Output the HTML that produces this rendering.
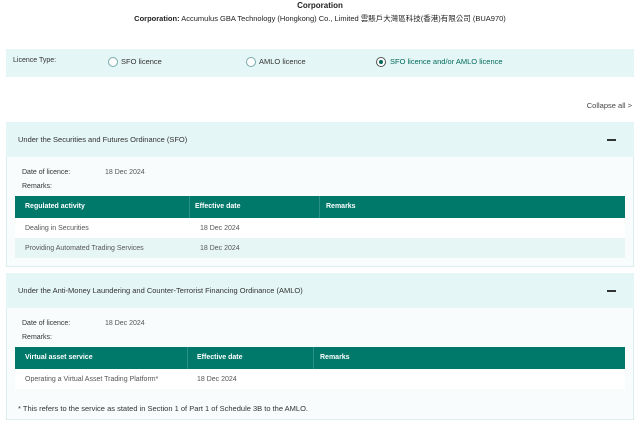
<!DOCTYPE html>
<html><head><meta charset="utf-8"><style>
*{margin:0;padding:0;box-sizing:border-box}
body{width:640px;height:427px;background:#fff;font-family:"Liberation Sans","Noto Sans CJK TC",sans-serif;color:#333;font-size:7px;position:relative;overflow:hidden}
.a{position:absolute;white-space:nowrap}
.bar{position:absolute;left:6px;width:628px;background:#e4f6f5}
.body{position:absolute;left:6px;width:628px;background:#f8fcfc;border:1px solid #dceeee;border-top:none}
.th{position:absolute;left:15px;width:610px;height:22px;background:#00796b;color:#fff;font-weight:bold}
.th span,.tr span{position:absolute;top:7px}
.tr{position:absolute;left:15px;width:610px;height:20px;background:#fff;color:#555}
.radio{position:absolute;width:10px;height:10px;border:1px solid #7aa;border-radius:50%;background:#fff}
.minus{position:absolute;left:607px;width:9px;height:2px;background:#333}
</style></head><body>
<div class="a" style="left:0;width:640px;text-align:center;top:1px;font-weight:bold;font-size:8px;color:#222">Corporation</div>
<div class="a" style="left:0;width:640px;text-align:center;top:13px;font-size:7.5px;color:#222"><b>Corporation:</b> Accumulus GBA Technology (Hongkong) Co., Limited 雲賬戶大灣區科技(香港)有限公司 (BUA970)</div>

<div class="bar" style="top:49px;height:28px"></div>
<div class="a" style="left:13px;top:57px">Licence Type:</div>
<div class="radio" style="left:108px;top:57px"></div><div class="a" style="left:121px;top:57px;font-size:7.5px">SFO licence</div>
<div class="radio" style="left:246px;top:57px"></div><div class="a" style="left:259px;top:57px;font-size:7.5px">AMLO licence</div>
<div class="radio" style="left:376px;top:57px;border-color:#555"><div style="position:absolute;left:2px;top:2px;width:4px;height:4px;border-radius:50%;background:#00695c"></div></div>
<div class="a" style="left:390px;top:57px;font-size:7.5px;color:#00695c">SFO licence and/or AMLO licence</div>

<div class="a" style="right:8px;top:101px;font-size:7.5px;color:#444">Collapse all &gt;</div>

<div class="bar" style="top:122px;height:35px"></div>
<div class="a" style="left:18px;top:135px;font-size:7.5px">Under the Securities and Futures Ordinance (SFO)</div>
<div class="minus" style="top:139px"></div>
<div class="body" style="top:157px;height:110px"></div>
<div class="a" style="left:22px;top:169px">Date of licence:</div><div class="a" style="left:105px;top:169px;color:#555">18 Dec 2024</div>
<div class="a" style="left:22px;top:183px">Remarks:</div>
<div class="th" style="top:196px"><span style="left:10px">Regulated activity</span><span style="left:180px">Effective date</span><span style="left:311px">Remarks</span><div style="position:absolute;left:174px;top:0;width:1px;height:22px;background:#2a9285"></div><div style="position:absolute;left:304px;top:0;width:1px;height:22px;background:#2a9285"></div></div>
<div class="tr" style="top:218px"><span style="left:10px">Dealing in Securities</span><span style="left:185px">18 Dec 2024</span></div>
<div class="tr" style="top:238px;background:#e6f6f5"><span style="left:10px">Providing Automated Trading Services</span><span style="left:185px">18 Dec 2024</span></div>

<div class="bar" style="top:273px;height:35px"></div>
<div class="a" style="left:18px;top:286px;font-size:7.5px">Under the Anti-Money Laundering and Counter-Terrorist Financing Ordinance (AMLO)</div>
<div class="minus" style="top:290px"></div>
<div class="body" style="top:308px;height:112px"></div>
<div class="a" style="left:22px;top:320px">Date of licence:</div><div class="a" style="left:105px;top:320px;color:#555">18 Dec 2024</div>
<div class="a" style="left:22px;top:334px">Remarks:</div>
<div class="th" style="top:347px"><span style="left:10px">Virtual asset service</span><span style="left:182px">Effective date</span><span style="left:305px">Remarks</span><div style="position:absolute;left:172px;top:0;width:1px;height:22px;background:#2a9285"></div><div style="position:absolute;left:298px;top:0;width:1px;height:22px;background:#2a9285"></div></div>
<div class="tr" style="top:369px"><span style="left:10px">Operating a Virtual Asset Trading Platform*</span><span style="left:182px">18 Dec 2024</span></div>
<div class="a" style="left:18px;top:404px;font-size:7.5px">* This refers to the service as stated in Section 1 of Part 1 of Schedule 3B to the AMLO.</div>
</body></html>
